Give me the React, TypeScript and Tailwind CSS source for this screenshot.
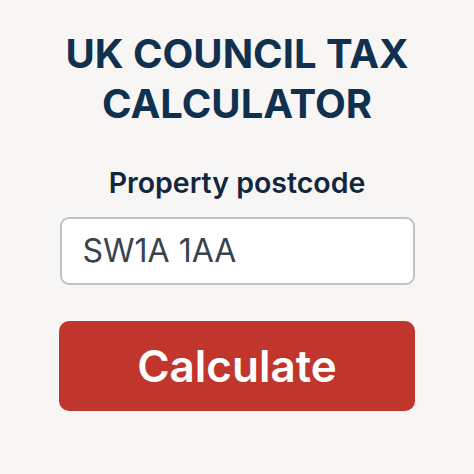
export default function App() {
  return (
    <div className="w-[474px] h-[474px] bg-[#f7f6f4] flex flex-col items-center font-['Inter','Liberation_Sans',sans-serif]">
      <h1 className="mt-[29px] text-[40px] leading-[50px] font-bold text-[#10304f] text-center">
        UK COUNCIL TAX
        <br />
        CALCULATOR
      </h1>
      <label className="mt-[37px] text-[28.5px] leading-[34px] font-semibold text-[#12263f]">Property postcode</label>
      <div className="mt-[17px] w-[355px] h-[68px] bg-white border-2 border-[#bfc3c6] rounded-[9px] flex items-center px-[21px]">
        <span className="text-[32px] text-[#38434d]">SW1A 1AA</span>
      </div>
      <button className="mt-[36px] w-[356px] h-[90px] bg-[#c0362c] rounded-[10px] text-white text-[44px] font-semibold">
        Calculate
      </button>
    </div>
  )
}
